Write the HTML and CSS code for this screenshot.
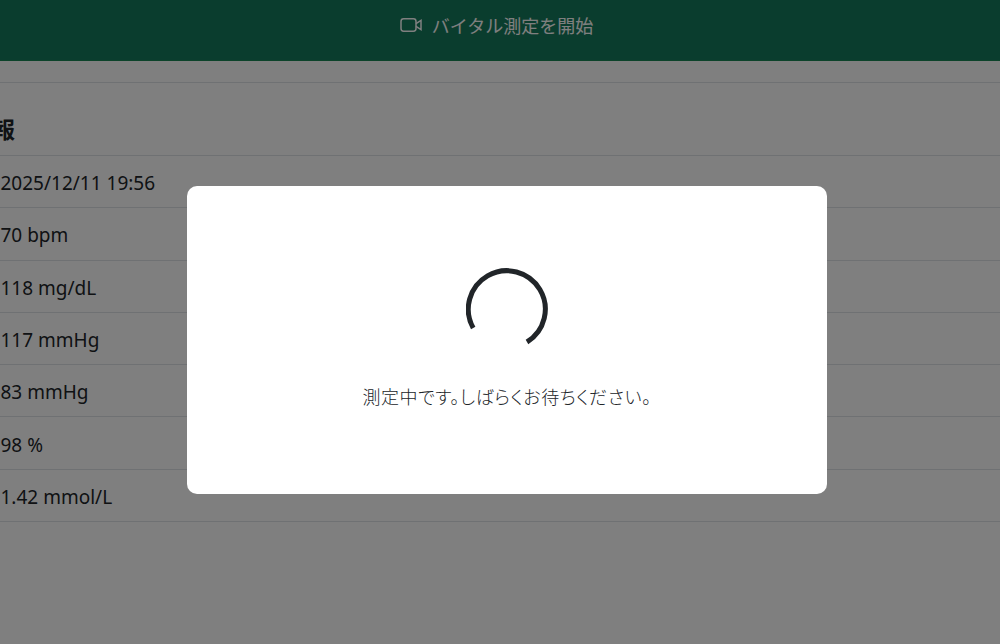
FILE: index.html
```html
<!DOCTYPE html>
<html lang="ja">
<head>
    <meta charset="UTF-8">
    <meta name="viewport" content="width=device-width, initial-scale=1.0">
    <title>バイタル測定</title>
    <link rel="stylesheet" href="styles.css">
</head>
<body>

    <header class="top-bar">
        <button class="start-button">
            <svg class="camera-icon" width="22" height="16" viewBox="0 0 22 16" fill="none" stroke="currentColor" stroke-width="1.5">
                <rect x="1" y="1.8" width="15" height="12.4" rx="2.6"/>
                <path d="M16 6.6 L21 3.4 V12.6 L16 9.4"/>
            </svg>
            バイタル測定を開始
        </button>
    </header>

    <main class="content">
        <div class="spacer-row"></div>

        <h2 class="section-title">バイタル情報</h2>

        <div class="info-row"><span class="info-label">測定日時</span><span>2025/12/11 19:56</span></div>
        <div class="info-row"><span class="info-label">脈拍</span><span>70 bpm</span></div>
        <div class="info-row"><span class="info-label">血糖値</span><span>118 mg/dL</span></div>
        <div class="info-row"><span class="info-label">最高血圧</span><span>117 mmHg</span></div>
        <div class="info-row"><span class="info-label">最低血圧</span><span>83 mmHg</span></div>
        <div class="info-row"><span class="info-label">酸素飽和度</span><span>98 %</span></div>
        <div class="info-row"><span class="info-label">ケトン体</span><span>1.42 mmol/L</span></div>
    </main>

    <div class="overlay">
        <div class="dialog">
            <svg class="spinner" width="82" height="82" viewBox="0 0 82 82" fill="none">
                <path d="M7.2 60 A38.5 38.5 0 1 1 61 74" stroke="#212529" stroke-width="5"/>
            </svg>
            <p class="dialog-text">測定中です。しばらくお待ちください。</p>
        </div>
    </div>

</body>
</html>
```

FILE: styles.css
```css
* {
    margin: 0;
    padding: 0;
    box-sizing: border-box;
}

html, body {
    height: 100%;
    overflow: hidden;
}

body {
    font-family: "Noto Sans", "Noto Sans CJK JP", sans-serif;
    background-color: #ffffff;
    color: #212529;
    font-size: 19px;
}

.top-bar {
    height: 61px;
    background-color: #157a5c;
    display: flex;
    align-items: center;
    justify-content: center;
    padding-right: 7px;
    padding-bottom: 10px;
    border-bottom: 1px solid #198754;
}

.start-button {
    display: flex;
    align-items: center;
    gap: 10px;
    background: none;
    border: none;
    color: #ffffff;
    font-family: inherit;
    font-size: 18px;
}

.content {
    margin-left: -170px;
    width: 1170px;
}

.spacer-row {
    height: 22px;
    border-bottom: 1px solid #dee2e6;
}

.section-title {
    height: 73px;
    display: flex;
    align-items: flex-end;
    padding-left: 48px;
    padding-bottom: 10px;
    font-size: 23px;
    font-weight: 600;
    border-bottom: 1px solid #dee2e6;
}

.info-row {
    height: 52.3px;
    display: flex;
    align-items: center;
    padding-top: 3px;
    border-bottom: 1px solid #dee2e6;
}

.info-label {
    width: 170.5px;
    padding-left: 12px;
    flex-shrink: 0;
}

.overlay {
    position: fixed;
    inset: 0;
    background-color: rgba(0, 0, 0, 0.5);
}

.dialog {
    position: absolute;
    left: 187px;
    top: 186px;
    width: 640px;
    height: 308px;
    background-color: #ffffff;
    border-radius: 10px;
    display: flex;
    flex-direction: column;
    align-items: center;
    padding-top: 82px;
}

.dialog-text {
    margin-top: 35px;
    font-size: 18px;
    font-weight: 300;
    line-height: 24px;
    letter-spacing: 0.55px;
    font-feature-settings: "palt";
}
```
